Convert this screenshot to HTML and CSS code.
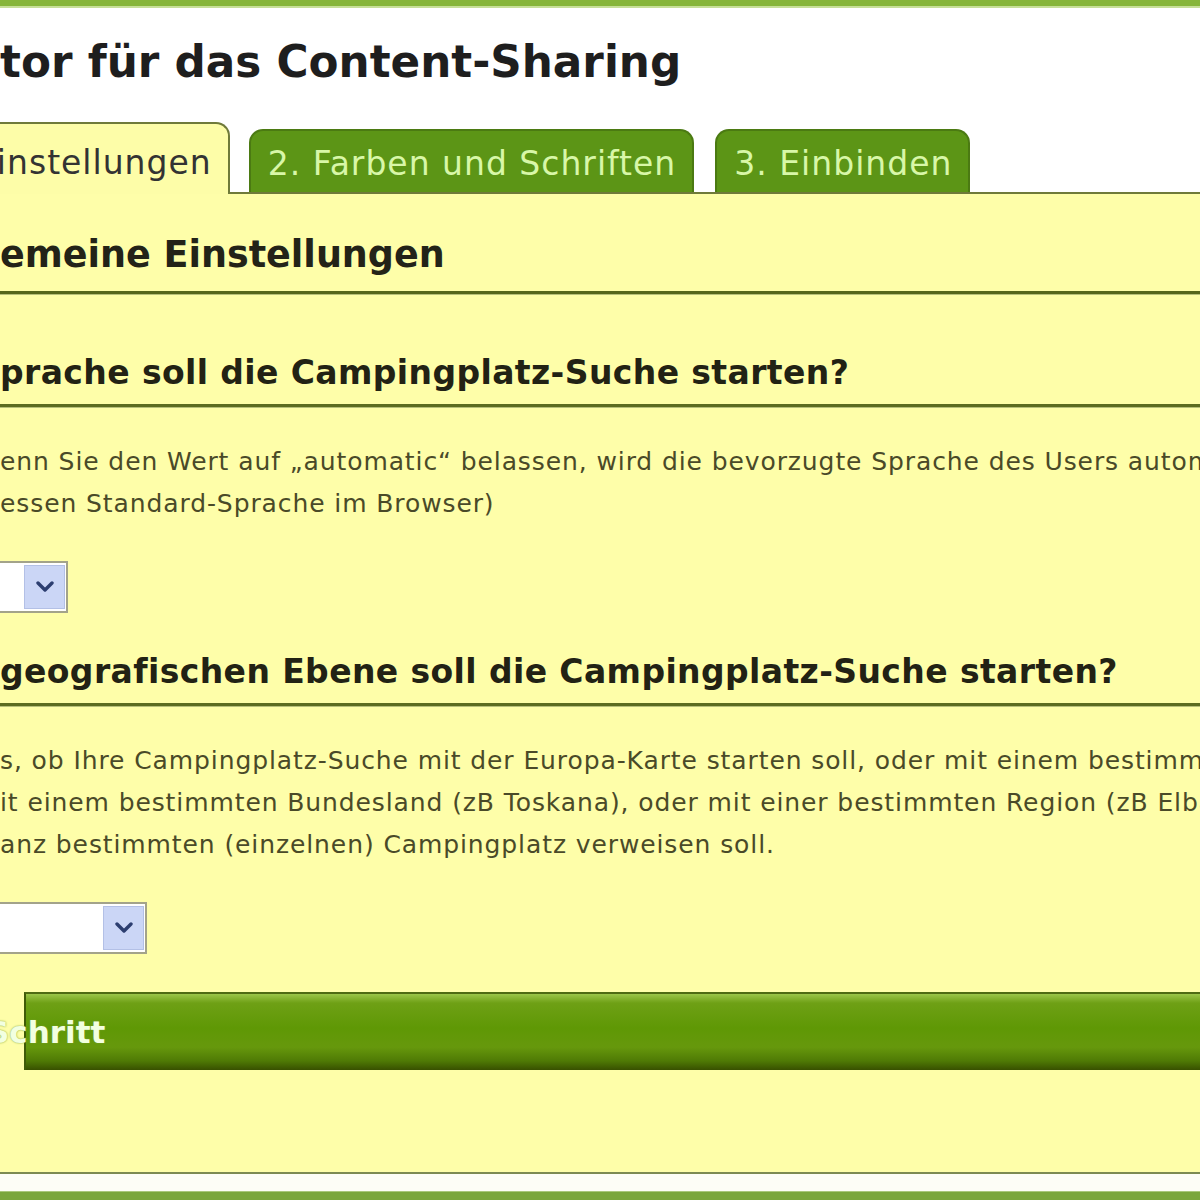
FILE: index.html
```html
<!DOCTYPE html>
<html lang="de">
<head>
<meta charset="utf-8">
<title>Konfigurator für das Content-Sharing</title>
<link rel="stylesheet" href="styles.css">
</head>
<body>
<div class="topbar"></div>
<header class="head">
  <h1 class="title">tor für das Content-Sharing</h1>
  <nav class="tabs">
    <div class="tab tab-active">Einstellungen</div>
    <div class="tab tab-green">2. Farben und Schriften</div>
    <div class="tab tab-green">3. Einbinden</div>
  </nav>
</header>
<main class="panel">
  <h2 class="section-title">emeine Einstellungen</h2>

  <section class="field field-first">
    <h3 class="question">prache soll die Campingplatz-Suche starten?</h3>
    <p class="hint">enn Sie den Wert auf „automatic“ belassen, wird die bevorzugte Sprache des Users automatisch<br>essen Standard-Sprache im Browser)</p>
    <div class="select select-short">
      <span class="select-btn"><svg width="20" height="12" viewBox="0 0 20 12"><path d="M3 2 L10 9 L17 2" fill="none" stroke="#2c3e70" stroke-width="3.4" stroke-linecap="round" stroke-linejoin="round"/></svg></span>
    </div>
  </section>

  <section class="field">
    <h3 class="question">geografischen Ebene soll die Campingplatz-Suche starten?</h3>
    <p class="hint">s, ob Ihre Campingplatz-Suche mit der Europa-Karte starten soll, oder mit einem bestimmten<br>it einem bestimmten Bundesland (zB Toskana), oder mit einer bestimmten Region (zB Elba)<br>anz bestimmten (einzelnen) Campingplatz verweisen soll.</p>
    <div class="select select-long">
      <span class="select-btn"><svg width="20" height="12" viewBox="0 0 20 12"><path d="M3 2 L10 9 L17 2" fill="none" stroke="#2c3e70" stroke-width="3.4" stroke-linecap="round" stroke-linejoin="round"/></svg></span>
    </div>
  </section>

  <div class="next-btn"><span class="next-label">Schritt</span></div>
</main>
<div class="footstrip"></div>
<div class="bottombar"></div>
</body>
</html>
```

FILE: styles.css
```css
html, body {
  margin: 0;
  padding: 0;
}
body {
  width: 1200px;
  height: 1200px;
  overflow: hidden;
  background: #ffffff;
  font-family: "DejaVu Sans", "Verdana", sans-serif;
  white-space: nowrap;
}
.topbar {
  height: 6px;
  background: #86b53a;
  border-bottom: 2px solid #c7df98;
}
.head {
  background: #ffffff;
}
.title {
  margin: 0;
  padding: 28px 0 0 0;
  height: 86px;
  line-height: 52px;
  font-size: 43.7px;
  font-weight: bold;
  color: #1e1e1e;
}
.tabs {
  display: flex;
  align-items: flex-end;
  gap: 19px;
  position: relative;
  z-index: 1;
}
.tab {
  font-size: 33px;
  letter-spacing: 1px;
  line-height: 36px;
  box-sizing: border-box;
}
.tab-active {
  height: 72px;
  margin-left: -25px;
  margin-bottom: -2px;
  padding: 21px 16px 0 0;
  background: #fdfda8;
  border: 2px solid #6f7a3a;
  border-left: none;
  border-bottom: none;
  border-radius: 0 14px 0 0;
  color: #333333;
}
.tab-green {
  height: 63px;
  padding: 15px 16px 0 17px;
  background: #5c9516;
  border: 2px solid #4b7a12;
  border-bottom: none;
  border-radius: 14px 14px 0 0;
  color: #d8f7a8;
}
.tab-green + .tab-green {
  margin-left: 2px;
}
.panel {
  background: #fefea9;
  border-top: 2px solid #6f7a3a;
  border-bottom: 2px solid #7c8a52;
  height: 982px;
  box-sizing: border-box;
  padding-top: 39px;
}
.section-title {
  margin: 0;
  font-size: 36.5px;
  line-height: 44px;
  font-weight: bold;
  color: #232318;
  padding-bottom: 14px;
  border-bottom: 3px solid #56661c;
  box-shadow: 0 1px 0 #b7c07a;
}
.field {
  margin-top: 39px;
}
.field-first {
  margin-top: 59px;
}
.question {
  margin: 0;
  font-size: 33px;
  letter-spacing: 0.4px;
  line-height: 40px;
  font-weight: bold;
  color: #222214;
  padding-bottom: 11px;
  border-bottom: 3px solid #5c6c20;
  box-shadow: 0 1px 0 #b7c07a;
}
.hint {
  margin: 34px 0 0 0;
  font-size: 25px;
  letter-spacing: 0.9px;
  line-height: 42px;
  color: #4a4a28;
}
.select {
  margin-top: 36px;
  margin-left: -2px;
  height: 52px;
  box-sizing: border-box;
  border: 2px solid #a3a38a;
  background: #ffffff;
  display: flex;
  justify-content: flex-end;
  align-items: center;
  padding-right: 1px;
}
.select-short { width: 70px; }
.select-long { width: 149px; }
.select-btn {
  width: 41px;
  height: 44px;
  background: #cbd6f6;
  border: 1px solid #b3c0e6;
  box-sizing: border-box;
  display: flex;
  align-items: center;
  justify-content: center;
}
.next-btn {
  margin: 38px 0 0 24px;
  height: 78px;
  box-sizing: border-box;
  border-top: 2px solid #4f6a12;
  border-left: 2px solid #3f5a08;
  background: linear-gradient(#9bc548 0%, #6ea015 12%, #5f9805 45%, #66980c 70%, #4f7a05 88%, #385000 100%);
  display: flex;
  align-items: center;
}
.next-label {
  margin-left: -39px;
  font-size: 31px;
  font-weight: bold;
  color: #f2ffe0;
  text-shadow: 0 0 2px #7aa030;
}
.footstrip {
  height: 17px;
  background: #fdfdf6;
}
.bottombar {
  height: 9px;
  background: #7aa63c;
  border-top: 1px solid #a9c77a;
}
```
